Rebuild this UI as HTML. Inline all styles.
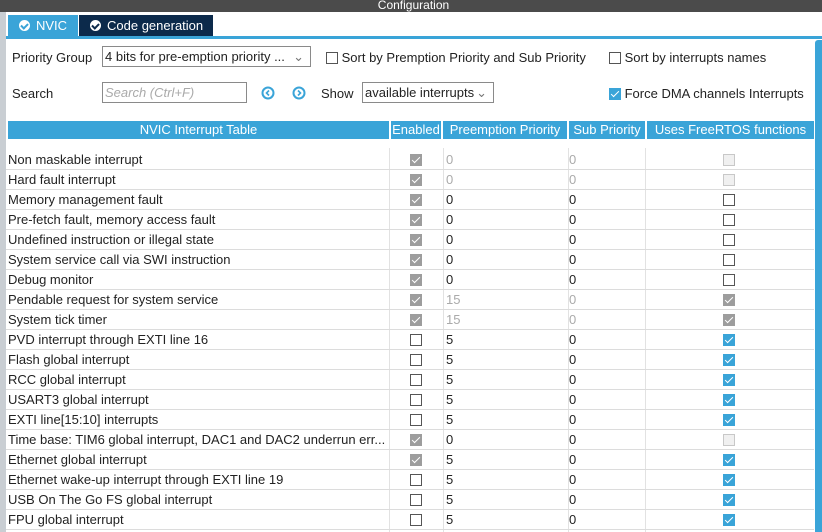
<!DOCTYPE html>
<html><head><meta charset="utf-8"><style>
*{margin:0;padding:0;box-sizing:border-box}
body{width:822px;height:532px;overflow:hidden;background:#fff;font-family:"Liberation Sans",Arial,sans-serif;font-size:13px;color:#222;position:relative}
.a{position:absolute}
.top{left:0;top:0;width:822px;height:12px;background:#4b4b4b;color:#fff;font-size:12px;line-height:11px;text-align:center;padding-left:5px}
.strip{left:0;top:12px;width:6px;height:520px;background:#c9ced3}
.tab{top:15px;height:21px;color:#fff;font-size:13px;line-height:21px;padding-left:11px}
.tab i{display:inline-block;width:11px;height:11px;border-radius:50%;background:#fff;vertical-align:-1px;margin-right:6px;position:relative}
.tab i:after{content:"";position:absolute;left:3px;top:2px;width:3px;height:5px;border:solid;border-width:0 2px 2px 0;transform:rotate(45deg)}
.cb{display:inline-block;width:12px;height:12px;border:1px solid #555;background:#fff;position:relative}
.cb.g{background:#9d9d9d;border-color:#9d9d9d}
.cb.b{background:#3aa4d8;border-color:#3aa4d8}
.cb.d{background:#f0f0f0;border-color:#c8c8c8}
.cb.g:after,.cb.b:after{content:"";position:absolute;left:3px;top:0px;width:3px;height:7px;border:solid #fff;border-width:0 1.5px 1.5px 0;transform:rotate(45deg)}
.sel{border:1px solid #8a8a8a;height:21px;line-height:19px;padding-left:2px;font-size:13px}
.hd{top:121px;height:18px;background:#3aa4d8;color:#fff;line-height:18px;text-align:center;font-size:13px}
.row{position:absolute;left:6px;width:808px;height:20px;border-bottom:1px solid #dcdcdc;line-height:19px}
.row span{position:absolute;top:0}
.n{left:2px}.e{left:404px;top:4px!important}.p{left:440px}.s{left:563px}.f{left:717px;top:4px!important}
.gr{color:#aaa}
.vl{position:absolute;top:148px;width:1px;height:384px;background:#e2e2e2}
</style></head><body>
<div class="a top">Configuration</div>
<div class="a strip"></div>
<div class="a tab" style="left:8px;width:70px;background:#3aa4d8"><i style="color:#3aa4d8"></i>NVIC</div>
<div class="a tab" style="left:79px;width:134px;background:#0c2a4b"><i style="color:#0c2a4b"></i>Code generation</div>
<div class="a" style="left:6px;top:36px;width:816px;height:3px;background:#3aa4d8"></div>
<div class="a" style="left:815px;top:40px;width:7px;height:492px;background:#3aa4d8;border-radius:3px 0 0 0"></div>
<div class="a" style="left:12px;top:50px">Priority Group</div>
<div class="a sel" style="left:102px;top:46px;width:209px">4 bits for pre-emption priority ... <span style="position:absolute;right:6px;color:#777">&#8964;</span></div>
<div class="a" style="left:326px;top:50px"><span class="cb" style="vertical-align:-2px"></span> Sort by Premption Priority and Sub Priority</div>
<div class="a" style="left:609px;top:50px"><span class="cb" style="vertical-align:-2px"></span> Sort by interrupts names</div>
<div class="a" style="left:12px;top:86px">Search</div>
<div class="a sel" style="left:102px;top:82px;width:145px;color:#aaa;font-style:italic">Search (Ctrl+F)</div>
<svg class="a" style="left:261px;top:86px" width="14" height="14"><circle cx="7" cy="7" r="5.5" fill="none" stroke="#3aa4d8" stroke-width="2"/><path d="M8 4.5L5.5 7 8 9.5" fill="none" stroke="#3aa4d8" stroke-width="1.6"/></svg>
<svg class="a" style="left:292px;top:86px" width="14" height="14"><circle cx="7" cy="7" r="5.5" fill="none" stroke="#3aa4d8" stroke-width="2"/><path d="M6 4.5L8.5 7 6 9.5" fill="none" stroke="#3aa4d8" stroke-width="1.6"/></svg>
<div class="a" style="left:321px;top:86px">Show</div>
<div class="a sel" style="left:362px;top:82px;width:132px">available interrupts <span style="position:absolute;right:6px;color:#777">&#8964;</span></div>
<div class="a" style="left:609px;top:86px"><span class="cb b" style="vertical-align:-2px"></span> Force DMA channels Interrupts</div>
<div class="a hd" style="left:8px;width:381px">NVIC Interrupt Table</div>
<div class="a hd" style="left:391px;width:50px">Enabled</div>
<div class="a hd" style="left:443px;width:124px">Preemption Priority</div>
<div class="a hd" style="left:569px;width:76px">Sub Priority</div>
<div class="a hd" style="left:647px;width:167px">Uses FreeRTOS functions</div>
<div class="vl" style="left:389px"></div><div class="vl" style="left:443px"></div><div class="vl" style="left:568px"></div><div class="vl" style="left:645px"></div>

<div class="row" style="top:150px"><span class="n">Non maskable interrupt</span><span class="cb g e"></span><span class="p gr">0</span><span class="s gr">0</span><span class="cb d f"></span></div>
<div class="row" style="top:170px"><span class="n">Hard fault interrupt</span><span class="cb g e"></span><span class="p gr">0</span><span class="s gr">0</span><span class="cb d f"></span></div>
<div class="row" style="top:190px"><span class="n">Memory management fault</span><span class="cb g e"></span><span class="p">0</span><span class="s">0</span><span class="cb f"></span></div>
<div class="row" style="top:210px"><span class="n">Pre-fetch fault, memory access fault</span><span class="cb g e"></span><span class="p">0</span><span class="s">0</span><span class="cb f"></span></div>
<div class="row" style="top:230px"><span class="n">Undefined instruction or illegal state</span><span class="cb g e"></span><span class="p">0</span><span class="s">0</span><span class="cb f"></span></div>
<div class="row" style="top:250px"><span class="n">System service call via SWI instruction</span><span class="cb g e"></span><span class="p">0</span><span class="s">0</span><span class="cb f"></span></div>
<div class="row" style="top:270px"><span class="n">Debug monitor</span><span class="cb g e"></span><span class="p">0</span><span class="s">0</span><span class="cb f"></span></div>
<div class="row" style="top:290px"><span class="n">Pendable request for system service</span><span class="cb g e"></span><span class="p gr">15</span><span class="s gr">0</span><span class="cb g f"></span></div>
<div class="row" style="top:310px"><span class="n">System tick timer</span><span class="cb g e"></span><span class="p gr">15</span><span class="s gr">0</span><span class="cb g f"></span></div>
<div class="row" style="top:330px"><span class="n">PVD interrupt through EXTI line 16</span><span class="cb e"></span><span class="p">5</span><span class="s">0</span><span class="cb b f"></span></div>
<div class="row" style="top:350px"><span class="n">Flash global interrupt</span><span class="cb e"></span><span class="p">5</span><span class="s">0</span><span class="cb b f"></span></div>
<div class="row" style="top:370px"><span class="n">RCC global interrupt</span><span class="cb e"></span><span class="p">5</span><span class="s">0</span><span class="cb b f"></span></div>
<div class="row" style="top:390px"><span class="n">USART3 global interrupt</span><span class="cb e"></span><span class="p">5</span><span class="s">0</span><span class="cb b f"></span></div>
<div class="row" style="top:410px"><span class="n">EXTI line[15:10] interrupts</span><span class="cb e"></span><span class="p">5</span><span class="s">0</span><span class="cb b f"></span></div>
<div class="row" style="top:430px"><span class="n">Time base: TIM6 global interrupt, DAC1 and DAC2 underrun err...</span><span class="cb g e"></span><span class="p">0</span><span class="s">0</span><span class="cb d f"></span></div>
<div class="row" style="top:450px"><span class="n">Ethernet global interrupt</span><span class="cb g e"></span><span class="p">5</span><span class="s">0</span><span class="cb b f"></span></div>
<div class="row" style="top:470px"><span class="n">Ethernet wake-up interrupt through EXTI line 19</span><span class="cb e"></span><span class="p">5</span><span class="s">0</span><span class="cb b f"></span></div>
<div class="row" style="top:490px"><span class="n">USB On The Go FS global interrupt</span><span class="cb e"></span><span class="p">5</span><span class="s">0</span><span class="cb b f"></span></div>
<div class="row" style="top:510px"><span class="n">FPU global interrupt</span><span class="cb e"></span><span class="p">5</span><span class="s">0</span><span class="cb b f"></span></div>
</body></html>
